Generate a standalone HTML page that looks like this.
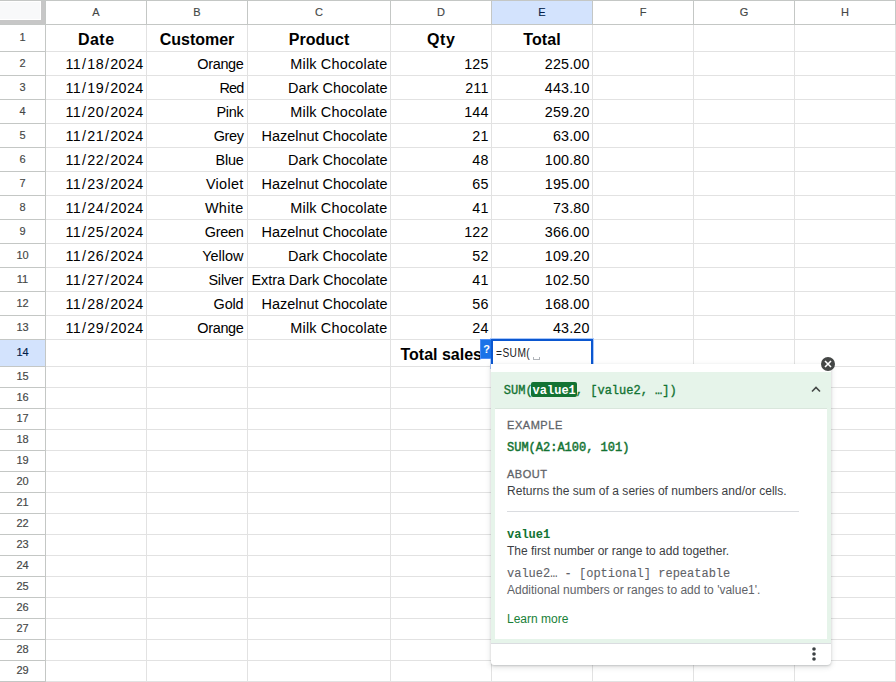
<!DOCTYPE html>
<html><head><meta charset="utf-8"><style>
html,body{margin:0;padding:0}
body{width:896px;height:682px;overflow:hidden;background:#fff;position:relative;font-family:'Liberation Sans', sans-serif}
div{position:absolute;box-sizing:border-box}
.t{white-space:nowrap;overflow:visible}
</style></head><body>
<div style="left:492px;top:1px;width:100px;height:23px;background:#d3e3fd;"></div>
<div style="left:0px;top:340px;width:45px;height:26px;background:#d3e3fd;"></div>
<div style="left:146px;top:25px;width:1px;height:657px;background:#e2e2e2;"></div>
<div style="left:247px;top:25px;width:1px;height:657px;background:#e2e2e2;"></div>
<div style="left:390px;top:25px;width:1px;height:657px;background:#e2e2e2;"></div>
<div style="left:491px;top:25px;width:1px;height:657px;background:#e2e2e2;"></div>
<div style="left:592px;top:25px;width:1px;height:657px;background:#e2e2e2;"></div>
<div style="left:693px;top:25px;width:1px;height:657px;background:#e2e2e2;"></div>
<div style="left:794px;top:25px;width:1px;height:657px;background:#e2e2e2;"></div>
<div style="left:895px;top:25px;width:1px;height:657px;background:#e2e2e2;"></div>
<div style="left:46px;top:51px;width:850px;height:1px;background:#e2e2e2;"></div>
<div style="left:46px;top:75px;width:850px;height:1px;background:#e2e2e2;"></div>
<div style="left:46px;top:99px;width:850px;height:1px;background:#e2e2e2;"></div>
<div style="left:46px;top:123px;width:850px;height:1px;background:#e2e2e2;"></div>
<div style="left:46px;top:147px;width:850px;height:1px;background:#e2e2e2;"></div>
<div style="left:46px;top:171px;width:850px;height:1px;background:#e2e2e2;"></div>
<div style="left:46px;top:195px;width:850px;height:1px;background:#e2e2e2;"></div>
<div style="left:46px;top:219px;width:850px;height:1px;background:#e2e2e2;"></div>
<div style="left:46px;top:243px;width:850px;height:1px;background:#e2e2e2;"></div>
<div style="left:46px;top:267px;width:850px;height:1px;background:#e2e2e2;"></div>
<div style="left:46px;top:291px;width:850px;height:1px;background:#e2e2e2;"></div>
<div style="left:46px;top:315px;width:850px;height:1px;background:#e2e2e2;"></div>
<div style="left:46px;top:339px;width:850px;height:1px;background:#e2e2e2;"></div>
<div style="left:46px;top:366px;width:850px;height:1px;background:#e2e2e2;"></div>
<div style="left:46px;top:387px;width:850px;height:1px;background:#e2e2e2;"></div>
<div style="left:46px;top:408px;width:850px;height:1px;background:#e2e2e2;"></div>
<div style="left:46px;top:429px;width:850px;height:1px;background:#e2e2e2;"></div>
<div style="left:46px;top:450px;width:850px;height:1px;background:#e2e2e2;"></div>
<div style="left:46px;top:471px;width:850px;height:1px;background:#e2e2e2;"></div>
<div style="left:46px;top:492px;width:850px;height:1px;background:#e2e2e2;"></div>
<div style="left:46px;top:513px;width:850px;height:1px;background:#e2e2e2;"></div>
<div style="left:46px;top:534px;width:850px;height:1px;background:#e2e2e2;"></div>
<div style="left:46px;top:555px;width:850px;height:1px;background:#e2e2e2;"></div>
<div style="left:46px;top:576px;width:850px;height:1px;background:#e2e2e2;"></div>
<div style="left:46px;top:597px;width:850px;height:1px;background:#e2e2e2;"></div>
<div style="left:46px;top:618px;width:850px;height:1px;background:#e2e2e2;"></div>
<div style="left:46px;top:639px;width:850px;height:1px;background:#e2e2e2;"></div>
<div style="left:46px;top:660px;width:850px;height:1px;background:#e2e2e2;"></div>
<div style="left:46px;top:681px;width:850px;height:1px;background:#e2e2e2;"></div>
<div style="left:0px;top:0px;width:896px;height:1px;background:#c4c7c5;"></div>
<div style="left:146px;top:0px;width:1px;height:25px;background:#c4c7c5;"></div>
<div style="left:247px;top:0px;width:1px;height:25px;background:#c4c7c5;"></div>
<div style="left:390px;top:0px;width:1px;height:25px;background:#c4c7c5;"></div>
<div style="left:491px;top:0px;width:1px;height:25px;background:#c4c7c5;"></div>
<div style="left:592px;top:0px;width:1px;height:25px;background:#c4c7c5;"></div>
<div style="left:693px;top:0px;width:1px;height:25px;background:#c4c7c5;"></div>
<div style="left:794px;top:0px;width:1px;height:25px;background:#c4c7c5;"></div>
<div style="left:895px;top:0px;width:1px;height:25px;background:#c4c7c5;"></div>
<div style="left:0px;top:51px;width:45px;height:1px;background:#c4c7c5;"></div>
<div style="left:0px;top:75px;width:45px;height:1px;background:#c4c7c5;"></div>
<div style="left:0px;top:99px;width:45px;height:1px;background:#c4c7c5;"></div>
<div style="left:0px;top:123px;width:45px;height:1px;background:#c4c7c5;"></div>
<div style="left:0px;top:147px;width:45px;height:1px;background:#c4c7c5;"></div>
<div style="left:0px;top:171px;width:45px;height:1px;background:#c4c7c5;"></div>
<div style="left:0px;top:195px;width:45px;height:1px;background:#c4c7c5;"></div>
<div style="left:0px;top:219px;width:45px;height:1px;background:#c4c7c5;"></div>
<div style="left:0px;top:243px;width:45px;height:1px;background:#c4c7c5;"></div>
<div style="left:0px;top:267px;width:45px;height:1px;background:#c4c7c5;"></div>
<div style="left:0px;top:291px;width:45px;height:1px;background:#c4c7c5;"></div>
<div style="left:0px;top:315px;width:45px;height:1px;background:#c4c7c5;"></div>
<div style="left:0px;top:339px;width:45px;height:1px;background:#c4c7c5;"></div>
<div style="left:0px;top:366px;width:45px;height:1px;background:#c4c7c5;"></div>
<div style="left:0px;top:387px;width:45px;height:1px;background:#c4c7c5;"></div>
<div style="left:0px;top:408px;width:45px;height:1px;background:#c4c7c5;"></div>
<div style="left:0px;top:429px;width:45px;height:1px;background:#c4c7c5;"></div>
<div style="left:0px;top:450px;width:45px;height:1px;background:#c4c7c5;"></div>
<div style="left:0px;top:471px;width:45px;height:1px;background:#c4c7c5;"></div>
<div style="left:0px;top:492px;width:45px;height:1px;background:#c4c7c5;"></div>
<div style="left:0px;top:513px;width:45px;height:1px;background:#c4c7c5;"></div>
<div style="left:0px;top:534px;width:45px;height:1px;background:#c4c7c5;"></div>
<div style="left:0px;top:555px;width:45px;height:1px;background:#c4c7c5;"></div>
<div style="left:0px;top:576px;width:45px;height:1px;background:#c4c7c5;"></div>
<div style="left:0px;top:597px;width:45px;height:1px;background:#c4c7c5;"></div>
<div style="left:0px;top:618px;width:45px;height:1px;background:#c4c7c5;"></div>
<div style="left:0px;top:639px;width:45px;height:1px;background:#c4c7c5;"></div>
<div style="left:0px;top:660px;width:45px;height:1px;background:#c4c7c5;"></div>
<div style="left:0px;top:681px;width:45px;height:1px;background:#c4c7c5;"></div>
<div style="left:0px;top:24px;width:896px;height:1px;background:#c4c7c5;"></div>
<div style="left:45px;top:0px;width:1px;height:682px;background:#c4c7c5;"></div>
<div style="left:0px;top:1px;width:45px;height:23px;background:#ffffff;"></div>
<div style="left:0px;top:2px;width:40px;height:17px;background:#f8f9fa;"></div>
<div style="left:41px;top:1px;width:4px;height:23px;background:#c7c7c7;"></div>
<div style="left:0px;top:20px;width:45px;height:4px;background:#c7c7c7;"></div>
<div class="t" style="left:46px;top:7.49px;width:100px;font-size:11px;line-height:11px;text-align:center;font-weight:normal;color:#444746;font-family:'Liberation Sans', sans-serif;-webkit-text-stroke:0.15px #444746">A</div>
<div class="t" style="left:147px;top:7.49px;width:100px;font-size:11px;line-height:11px;text-align:center;font-weight:normal;color:#444746;font-family:'Liberation Sans', sans-serif;-webkit-text-stroke:0.15px #444746">B</div>
<div class="t" style="left:248px;top:7.49px;width:142px;font-size:11px;line-height:11px;text-align:center;font-weight:normal;color:#444746;font-family:'Liberation Sans', sans-serif;-webkit-text-stroke:0.15px #444746">C</div>
<div class="t" style="left:391px;top:7.49px;width:100px;font-size:11px;line-height:11px;text-align:center;font-weight:normal;color:#444746;font-family:'Liberation Sans', sans-serif;-webkit-text-stroke:0.15px #444746">D</div>
<div class="t" style="left:492px;top:7.49px;width:100px;font-size:11px;line-height:11px;text-align:center;font-weight:normal;color:#041e49;font-family:'Liberation Sans', sans-serif;-webkit-text-stroke:0.15px #041e49">E</div>
<div class="t" style="left:593px;top:7.49px;width:100px;font-size:11px;line-height:11px;text-align:center;font-weight:normal;color:#444746;font-family:'Liberation Sans', sans-serif;-webkit-text-stroke:0.15px #444746">F</div>
<div class="t" style="left:694px;top:7.49px;width:100px;font-size:11px;line-height:11px;text-align:center;font-weight:normal;color:#444746;font-family:'Liberation Sans', sans-serif;-webkit-text-stroke:0.15px #444746">G</div>
<div class="t" style="left:795px;top:7.49px;width:100px;font-size:11px;line-height:11px;text-align:center;font-weight:normal;color:#444746;font-family:'Liberation Sans', sans-serif;-webkit-text-stroke:0.15px #444746">H</div>
<div class="t" style="left:0px;top:31.69px;width:45px;font-size:11px;line-height:11px;text-align:center;font-weight:normal;color:#444746;font-family:'Liberation Sans', sans-serif;-webkit-text-stroke:0.15px #444746">1</div>
<div class="t" style="left:0px;top:57.69px;width:45px;font-size:11px;line-height:11px;text-align:center;font-weight:normal;color:#444746;font-family:'Liberation Sans', sans-serif;-webkit-text-stroke:0.15px #444746">2</div>
<div class="t" style="left:0px;top:81.69px;width:45px;font-size:11px;line-height:11px;text-align:center;font-weight:normal;color:#444746;font-family:'Liberation Sans', sans-serif;-webkit-text-stroke:0.15px #444746">3</div>
<div class="t" style="left:0px;top:105.69px;width:45px;font-size:11px;line-height:11px;text-align:center;font-weight:normal;color:#444746;font-family:'Liberation Sans', sans-serif;-webkit-text-stroke:0.15px #444746">4</div>
<div class="t" style="left:0px;top:129.69px;width:45px;font-size:11px;line-height:11px;text-align:center;font-weight:normal;color:#444746;font-family:'Liberation Sans', sans-serif;-webkit-text-stroke:0.15px #444746">5</div>
<div class="t" style="left:0px;top:153.69px;width:45px;font-size:11px;line-height:11px;text-align:center;font-weight:normal;color:#444746;font-family:'Liberation Sans', sans-serif;-webkit-text-stroke:0.15px #444746">6</div>
<div class="t" style="left:0px;top:177.69px;width:45px;font-size:11px;line-height:11px;text-align:center;font-weight:normal;color:#444746;font-family:'Liberation Sans', sans-serif;-webkit-text-stroke:0.15px #444746">7</div>
<div class="t" style="left:0px;top:201.69px;width:45px;font-size:11px;line-height:11px;text-align:center;font-weight:normal;color:#444746;font-family:'Liberation Sans', sans-serif;-webkit-text-stroke:0.15px #444746">8</div>
<div class="t" style="left:0px;top:225.69px;width:45px;font-size:11px;line-height:11px;text-align:center;font-weight:normal;color:#444746;font-family:'Liberation Sans', sans-serif;-webkit-text-stroke:0.15px #444746">9</div>
<div class="t" style="left:0px;top:249.69px;width:45px;font-size:11px;line-height:11px;text-align:center;font-weight:normal;color:#444746;font-family:'Liberation Sans', sans-serif;-webkit-text-stroke:0.15px #444746">10</div>
<div class="t" style="left:0px;top:273.69px;width:45px;font-size:11px;line-height:11px;text-align:center;font-weight:normal;color:#444746;font-family:'Liberation Sans', sans-serif;-webkit-text-stroke:0.15px #444746">11</div>
<div class="t" style="left:0px;top:297.69px;width:45px;font-size:11px;line-height:11px;text-align:center;font-weight:normal;color:#444746;font-family:'Liberation Sans', sans-serif;-webkit-text-stroke:0.15px #444746">12</div>
<div class="t" style="left:0px;top:321.69px;width:45px;font-size:11px;line-height:11px;text-align:center;font-weight:normal;color:#444746;font-family:'Liberation Sans', sans-serif;-webkit-text-stroke:0.15px #444746">13</div>
<div class="t" style="left:0px;top:346.69px;width:45px;font-size:11px;line-height:11px;text-align:center;font-weight:normal;color:#041e49;font-family:'Liberation Sans', sans-serif;-webkit-text-stroke:0.15px #041e49">14</div>
<div class="t" style="left:0px;top:370.69px;width:45px;font-size:11px;line-height:11px;text-align:center;font-weight:normal;color:#444746;font-family:'Liberation Sans', sans-serif;-webkit-text-stroke:0.15px #444746">15</div>
<div class="t" style="left:0px;top:391.69px;width:45px;font-size:11px;line-height:11px;text-align:center;font-weight:normal;color:#444746;font-family:'Liberation Sans', sans-serif;-webkit-text-stroke:0.15px #444746">16</div>
<div class="t" style="left:0px;top:412.69px;width:45px;font-size:11px;line-height:11px;text-align:center;font-weight:normal;color:#444746;font-family:'Liberation Sans', sans-serif;-webkit-text-stroke:0.15px #444746">17</div>
<div class="t" style="left:0px;top:433.69px;width:45px;font-size:11px;line-height:11px;text-align:center;font-weight:normal;color:#444746;font-family:'Liberation Sans', sans-serif;-webkit-text-stroke:0.15px #444746">18</div>
<div class="t" style="left:0px;top:454.69px;width:45px;font-size:11px;line-height:11px;text-align:center;font-weight:normal;color:#444746;font-family:'Liberation Sans', sans-serif;-webkit-text-stroke:0.15px #444746">19</div>
<div class="t" style="left:0px;top:475.69px;width:45px;font-size:11px;line-height:11px;text-align:center;font-weight:normal;color:#444746;font-family:'Liberation Sans', sans-serif;-webkit-text-stroke:0.15px #444746">20</div>
<div class="t" style="left:0px;top:496.69px;width:45px;font-size:11px;line-height:11px;text-align:center;font-weight:normal;color:#444746;font-family:'Liberation Sans', sans-serif;-webkit-text-stroke:0.15px #444746">21</div>
<div class="t" style="left:0px;top:517.69px;width:45px;font-size:11px;line-height:11px;text-align:center;font-weight:normal;color:#444746;font-family:'Liberation Sans', sans-serif;-webkit-text-stroke:0.15px #444746">22</div>
<div class="t" style="left:0px;top:538.69px;width:45px;font-size:11px;line-height:11px;text-align:center;font-weight:normal;color:#444746;font-family:'Liberation Sans', sans-serif;-webkit-text-stroke:0.15px #444746">23</div>
<div class="t" style="left:0px;top:559.69px;width:45px;font-size:11px;line-height:11px;text-align:center;font-weight:normal;color:#444746;font-family:'Liberation Sans', sans-serif;-webkit-text-stroke:0.15px #444746">24</div>
<div class="t" style="left:0px;top:580.69px;width:45px;font-size:11px;line-height:11px;text-align:center;font-weight:normal;color:#444746;font-family:'Liberation Sans', sans-serif;-webkit-text-stroke:0.15px #444746">25</div>
<div class="t" style="left:0px;top:601.69px;width:45px;font-size:11px;line-height:11px;text-align:center;font-weight:normal;color:#444746;font-family:'Liberation Sans', sans-serif;-webkit-text-stroke:0.15px #444746">26</div>
<div class="t" style="left:0px;top:622.69px;width:45px;font-size:11px;line-height:11px;text-align:center;font-weight:normal;color:#444746;font-family:'Liberation Sans', sans-serif;-webkit-text-stroke:0.15px #444746">27</div>
<div class="t" style="left:0px;top:643.69px;width:45px;font-size:11px;line-height:11px;text-align:center;font-weight:normal;color:#444746;font-family:'Liberation Sans', sans-serif;-webkit-text-stroke:0.15px #444746">28</div>
<div class="t" style="left:0px;top:664.69px;width:45px;font-size:11px;line-height:11px;text-align:center;font-weight:normal;color:#444746;font-family:'Liberation Sans', sans-serif;-webkit-text-stroke:0.15px #444746">29</div>
<div class="t" style="left:46.25px;top:31.96px;width:100px;font-size:16px;line-height:16px;text-align:center;font-weight:bold;color:#000;font-family:'Liberation Sans', sans-serif;letter-spacing:0.5px">Date</div>
<div class="t" style="left:147.0px;top:31.96px;width:100px;font-size:16px;line-height:16px;text-align:center;font-weight:bold;color:#000;font-family:'Liberation Sans', sans-serif;letter-spacing:0px">Customer</div>
<div class="t" style="left:248.0px;top:31.96px;width:142px;font-size:16px;line-height:16px;text-align:center;font-weight:bold;color:#000;font-family:'Liberation Sans', sans-serif;letter-spacing:0px">Product</div>
<div class="t" style="left:391.3px;top:31.96px;width:100px;font-size:16px;line-height:16px;text-align:center;font-weight:bold;color:#000;font-family:'Liberation Sans', sans-serif;letter-spacing:0.6px">Qty</div>
<div class="t" style="left:492.075px;top:31.96px;width:100px;font-size:16px;line-height:16px;text-align:center;font-weight:bold;color:#000;font-family:'Liberation Sans', sans-serif;letter-spacing:0.15px">Total</div>
<div class="t" style="left:46px;top:57.30px;width:97.5px;font-size:14.3px;line-height:14.3px;text-align:right;font-weight:normal;color:#000;font-family:'Liberation Sans', sans-serif;letter-spacing:0.35px">11<span style="margin:0 1.0px">/</span>18<span style="margin:0 1.0px">/</span>2024</div>
<div class="t" style="left:147px;top:57.17px;width:96.5px;font-size:14.45px;line-height:14.45px;text-align:right;font-weight:normal;color:#000;font-family:'Liberation Sans', sans-serif;letter-spacing:-0.33px">Orange</div>
<div class="t" style="left:248px;top:57.17px;width:139.5px;font-size:14.45px;line-height:14.45px;text-align:right;font-weight:normal;color:#000;font-family:'Liberation Sans', sans-serif;letter-spacing:0.18px">Milk Chocolate</div>
<div class="t" style="left:391px;top:57.30px;width:97.5px;font-size:14.3px;line-height:14.3px;text-align:right;font-weight:normal;color:#000;font-family:'Liberation Sans', sans-serif;letter-spacing:0.15px">125</div>
<div class="t" style="left:492px;top:57.30px;width:97.5px;font-size:14.3px;line-height:14.3px;text-align:right;font-weight:normal;color:#000;font-family:'Liberation Sans', sans-serif;letter-spacing:0.15px">225.00</div>
<div class="t" style="left:46px;top:81.30px;width:97.5px;font-size:14.3px;line-height:14.3px;text-align:right;font-weight:normal;color:#000;font-family:'Liberation Sans', sans-serif;letter-spacing:0.35px">11<span style="margin:0 1.0px">/</span>19<span style="margin:0 1.0px">/</span>2024</div>
<div class="t" style="left:147px;top:81.17px;width:96.5px;font-size:14.45px;line-height:14.45px;text-align:right;font-weight:normal;color:#000;font-family:'Liberation Sans', sans-serif;letter-spacing:-0.8px">Red</div>
<div class="t" style="left:248px;top:81.17px;width:139.5px;font-size:14.45px;line-height:14.45px;text-align:right;font-weight:normal;color:#000;font-family:'Liberation Sans', sans-serif;letter-spacing:0px">Dark Chocolate</div>
<div class="t" style="left:391px;top:81.30px;width:97.5px;font-size:14.3px;line-height:14.3px;text-align:right;font-weight:normal;color:#000;font-family:'Liberation Sans', sans-serif;letter-spacing:0.15px">211</div>
<div class="t" style="left:492px;top:81.30px;width:97.5px;font-size:14.3px;line-height:14.3px;text-align:right;font-weight:normal;color:#000;font-family:'Liberation Sans', sans-serif;letter-spacing:0.15px">443.10</div>
<div class="t" style="left:46px;top:105.30px;width:97.5px;font-size:14.3px;line-height:14.3px;text-align:right;font-weight:normal;color:#000;font-family:'Liberation Sans', sans-serif;letter-spacing:0.35px">11<span style="margin:0 1.0px">/</span>20<span style="margin:0 1.0px">/</span>2024</div>
<div class="t" style="left:147px;top:105.17px;width:96.5px;font-size:14.45px;line-height:14.45px;text-align:right;font-weight:normal;color:#000;font-family:'Liberation Sans', sans-serif;letter-spacing:-0.25px">Pink</div>
<div class="t" style="left:248px;top:105.17px;width:139.5px;font-size:14.45px;line-height:14.45px;text-align:right;font-weight:normal;color:#000;font-family:'Liberation Sans', sans-serif;letter-spacing:0.18px">Milk Chocolate</div>
<div class="t" style="left:391px;top:105.30px;width:97.5px;font-size:14.3px;line-height:14.3px;text-align:right;font-weight:normal;color:#000;font-family:'Liberation Sans', sans-serif;letter-spacing:0.15px">144</div>
<div class="t" style="left:492px;top:105.30px;width:97.5px;font-size:14.3px;line-height:14.3px;text-align:right;font-weight:normal;color:#000;font-family:'Liberation Sans', sans-serif;letter-spacing:0.15px">259.20</div>
<div class="t" style="left:46px;top:129.30px;width:97.5px;font-size:14.3px;line-height:14.3px;text-align:right;font-weight:normal;color:#000;font-family:'Liberation Sans', sans-serif;letter-spacing:0.35px">11<span style="margin:0 1.0px">/</span>21<span style="margin:0 1.0px">/</span>2024</div>
<div class="t" style="left:147px;top:129.17px;width:96.5px;font-size:14.45px;line-height:14.45px;text-align:right;font-weight:normal;color:#000;font-family:'Liberation Sans', sans-serif;letter-spacing:-0.37px">Grey</div>
<div class="t" style="left:248px;top:129.17px;width:139.5px;font-size:14.45px;line-height:14.45px;text-align:right;font-weight:normal;color:#000;font-family:'Liberation Sans', sans-serif;letter-spacing:0px">Hazelnut Chocolate</div>
<div class="t" style="left:391px;top:129.30px;width:97.5px;font-size:14.3px;line-height:14.3px;text-align:right;font-weight:normal;color:#000;font-family:'Liberation Sans', sans-serif;letter-spacing:0.15px">21</div>
<div class="t" style="left:492px;top:129.30px;width:97.5px;font-size:14.3px;line-height:14.3px;text-align:right;font-weight:normal;color:#000;font-family:'Liberation Sans', sans-serif;letter-spacing:0.15px">63.00</div>
<div class="t" style="left:46px;top:153.30px;width:97.5px;font-size:14.3px;line-height:14.3px;text-align:right;font-weight:normal;color:#000;font-family:'Liberation Sans', sans-serif;letter-spacing:0.35px">11<span style="margin:0 1.0px">/</span>22<span style="margin:0 1.0px">/</span>2024</div>
<div class="t" style="left:147px;top:153.17px;width:96.5px;font-size:14.45px;line-height:14.45px;text-align:right;font-weight:normal;color:#000;font-family:'Liberation Sans', sans-serif;letter-spacing:-0.25px">Blue</div>
<div class="t" style="left:248px;top:153.17px;width:139.5px;font-size:14.45px;line-height:14.45px;text-align:right;font-weight:normal;color:#000;font-family:'Liberation Sans', sans-serif;letter-spacing:0px">Dark Chocolate</div>
<div class="t" style="left:391px;top:153.30px;width:97.5px;font-size:14.3px;line-height:14.3px;text-align:right;font-weight:normal;color:#000;font-family:'Liberation Sans', sans-serif;letter-spacing:0.15px">48</div>
<div class="t" style="left:492px;top:153.30px;width:97.5px;font-size:14.3px;line-height:14.3px;text-align:right;font-weight:normal;color:#000;font-family:'Liberation Sans', sans-serif;letter-spacing:0.15px">100.80</div>
<div class="t" style="left:46px;top:177.30px;width:97.5px;font-size:14.3px;line-height:14.3px;text-align:right;font-weight:normal;color:#000;font-family:'Liberation Sans', sans-serif;letter-spacing:0.35px">11<span style="margin:0 1.0px">/</span>23<span style="margin:0 1.0px">/</span>2024</div>
<div class="t" style="left:147px;top:177.17px;width:96.5px;font-size:14.45px;line-height:14.45px;text-align:right;font-weight:normal;color:#000;font-family:'Liberation Sans', sans-serif;letter-spacing:0.28px">Violet</div>
<div class="t" style="left:248px;top:177.17px;width:139.5px;font-size:14.45px;line-height:14.45px;text-align:right;font-weight:normal;color:#000;font-family:'Liberation Sans', sans-serif;letter-spacing:0px">Hazelnut Chocolate</div>
<div class="t" style="left:391px;top:177.30px;width:97.5px;font-size:14.3px;line-height:14.3px;text-align:right;font-weight:normal;color:#000;font-family:'Liberation Sans', sans-serif;letter-spacing:0.15px">65</div>
<div class="t" style="left:492px;top:177.30px;width:97.5px;font-size:14.3px;line-height:14.3px;text-align:right;font-weight:normal;color:#000;font-family:'Liberation Sans', sans-serif;letter-spacing:0.15px">195.00</div>
<div class="t" style="left:46px;top:201.30px;width:97.5px;font-size:14.3px;line-height:14.3px;text-align:right;font-weight:normal;color:#000;font-family:'Liberation Sans', sans-serif;letter-spacing:0.35px">11<span style="margin:0 1.0px">/</span>24<span style="margin:0 1.0px">/</span>2024</div>
<div class="t" style="left:147px;top:201.17px;width:96.5px;font-size:14.45px;line-height:14.45px;text-align:right;font-weight:normal;color:#000;font-family:'Liberation Sans', sans-serif;letter-spacing:0.34px">White</div>
<div class="t" style="left:248px;top:201.17px;width:139.5px;font-size:14.45px;line-height:14.45px;text-align:right;font-weight:normal;color:#000;font-family:'Liberation Sans', sans-serif;letter-spacing:0.18px">Milk Chocolate</div>
<div class="t" style="left:391px;top:201.30px;width:97.5px;font-size:14.3px;line-height:14.3px;text-align:right;font-weight:normal;color:#000;font-family:'Liberation Sans', sans-serif;letter-spacing:0.15px">41</div>
<div class="t" style="left:492px;top:201.30px;width:97.5px;font-size:14.3px;line-height:14.3px;text-align:right;font-weight:normal;color:#000;font-family:'Liberation Sans', sans-serif;letter-spacing:0.15px">73.80</div>
<div class="t" style="left:46px;top:225.30px;width:97.5px;font-size:14.3px;line-height:14.3px;text-align:right;font-weight:normal;color:#000;font-family:'Liberation Sans', sans-serif;letter-spacing:0.35px">11<span style="margin:0 1.0px">/</span>25<span style="margin:0 1.0px">/</span>2024</div>
<div class="t" style="left:147px;top:225.17px;width:96.5px;font-size:14.45px;line-height:14.45px;text-align:right;font-weight:normal;color:#000;font-family:'Liberation Sans', sans-serif;letter-spacing:-0.3px">Green</div>
<div class="t" style="left:248px;top:225.17px;width:139.5px;font-size:14.45px;line-height:14.45px;text-align:right;font-weight:normal;color:#000;font-family:'Liberation Sans', sans-serif;letter-spacing:0px">Hazelnut Chocolate</div>
<div class="t" style="left:391px;top:225.30px;width:97.5px;font-size:14.3px;line-height:14.3px;text-align:right;font-weight:normal;color:#000;font-family:'Liberation Sans', sans-serif;letter-spacing:0.15px">122</div>
<div class="t" style="left:492px;top:225.30px;width:97.5px;font-size:14.3px;line-height:14.3px;text-align:right;font-weight:normal;color:#000;font-family:'Liberation Sans', sans-serif;letter-spacing:0.15px">366.00</div>
<div class="t" style="left:46px;top:249.30px;width:97.5px;font-size:14.3px;line-height:14.3px;text-align:right;font-weight:normal;color:#000;font-family:'Liberation Sans', sans-serif;letter-spacing:0.35px">11<span style="margin:0 1.0px">/</span>26<span style="margin:0 1.0px">/</span>2024</div>
<div class="t" style="left:147px;top:249.17px;width:96.5px;font-size:14.45px;line-height:14.45px;text-align:right;font-weight:normal;color:#000;font-family:'Liberation Sans', sans-serif;letter-spacing:0px">Yellow</div>
<div class="t" style="left:248px;top:249.17px;width:139.5px;font-size:14.45px;line-height:14.45px;text-align:right;font-weight:normal;color:#000;font-family:'Liberation Sans', sans-serif;letter-spacing:0px">Dark Chocolate</div>
<div class="t" style="left:391px;top:249.30px;width:97.5px;font-size:14.3px;line-height:14.3px;text-align:right;font-weight:normal;color:#000;font-family:'Liberation Sans', sans-serif;letter-spacing:0.15px">52</div>
<div class="t" style="left:492px;top:249.30px;width:97.5px;font-size:14.3px;line-height:14.3px;text-align:right;font-weight:normal;color:#000;font-family:'Liberation Sans', sans-serif;letter-spacing:0.15px">109.20</div>
<div class="t" style="left:46px;top:273.30px;width:97.5px;font-size:14.3px;line-height:14.3px;text-align:right;font-weight:normal;color:#000;font-family:'Liberation Sans', sans-serif;letter-spacing:0.35px">11<span style="margin:0 1.0px">/</span>27<span style="margin:0 1.0px">/</span>2024</div>
<div class="t" style="left:147px;top:273.17px;width:96.5px;font-size:14.45px;line-height:14.45px;text-align:right;font-weight:normal;color:#000;font-family:'Liberation Sans', sans-serif;letter-spacing:-0.17px">Silver</div>
<div class="t" style="left:248px;top:273.17px;width:139.5px;font-size:14.45px;line-height:14.45px;text-align:right;font-weight:normal;color:#000;font-family:'Liberation Sans', sans-serif;letter-spacing:-0.06px">Extra Dark Chocolate</div>
<div class="t" style="left:391px;top:273.30px;width:97.5px;font-size:14.3px;line-height:14.3px;text-align:right;font-weight:normal;color:#000;font-family:'Liberation Sans', sans-serif;letter-spacing:0.15px">41</div>
<div class="t" style="left:492px;top:273.30px;width:97.5px;font-size:14.3px;line-height:14.3px;text-align:right;font-weight:normal;color:#000;font-family:'Liberation Sans', sans-serif;letter-spacing:0.15px">102.50</div>
<div class="t" style="left:46px;top:297.30px;width:97.5px;font-size:14.3px;line-height:14.3px;text-align:right;font-weight:normal;color:#000;font-family:'Liberation Sans', sans-serif;letter-spacing:0.35px">11<span style="margin:0 1.0px">/</span>28<span style="margin:0 1.0px">/</span>2024</div>
<div class="t" style="left:147px;top:297.17px;width:96.5px;font-size:14.45px;line-height:14.45px;text-align:right;font-weight:normal;color:#000;font-family:'Liberation Sans', sans-serif;letter-spacing:-0.15px">Gold</div>
<div class="t" style="left:248px;top:297.17px;width:139.5px;font-size:14.45px;line-height:14.45px;text-align:right;font-weight:normal;color:#000;font-family:'Liberation Sans', sans-serif;letter-spacing:0px">Hazelnut Chocolate</div>
<div class="t" style="left:391px;top:297.30px;width:97.5px;font-size:14.3px;line-height:14.3px;text-align:right;font-weight:normal;color:#000;font-family:'Liberation Sans', sans-serif;letter-spacing:0.15px">56</div>
<div class="t" style="left:492px;top:297.30px;width:97.5px;font-size:14.3px;line-height:14.3px;text-align:right;font-weight:normal;color:#000;font-family:'Liberation Sans', sans-serif;letter-spacing:0.15px">168.00</div>
<div class="t" style="left:46px;top:321.30px;width:97.5px;font-size:14.3px;line-height:14.3px;text-align:right;font-weight:normal;color:#000;font-family:'Liberation Sans', sans-serif;letter-spacing:0.35px">11<span style="margin:0 1.0px">/</span>29<span style="margin:0 1.0px">/</span>2024</div>
<div class="t" style="left:147px;top:321.17px;width:96.5px;font-size:14.45px;line-height:14.45px;text-align:right;font-weight:normal;color:#000;font-family:'Liberation Sans', sans-serif;letter-spacing:-0.33px">Orange</div>
<div class="t" style="left:248px;top:321.17px;width:139.5px;font-size:14.45px;line-height:14.45px;text-align:right;font-weight:normal;color:#000;font-family:'Liberation Sans', sans-serif;letter-spacing:0.18px">Milk Chocolate</div>
<div class="t" style="left:391px;top:321.30px;width:97.5px;font-size:14.3px;line-height:14.3px;text-align:right;font-weight:normal;color:#000;font-family:'Liberation Sans', sans-serif;letter-spacing:0.15px">24</div>
<div class="t" style="left:492px;top:321.30px;width:97.5px;font-size:14.3px;line-height:14.3px;text-align:right;font-weight:normal;color:#000;font-family:'Liberation Sans', sans-serif;letter-spacing:0.15px">43.20</div>
<div class="t" style="left:392px;top:346.76px;width:90px;font-size:16px;line-height:16px;text-align:right;font-weight:bold;color:#000;font-family:'Liberation Sans', sans-serif;">Total sales</div>
<!-- editor -->
<div style="left:490px;top:338px;width:104px;height:26px;background:#a8c7fa"></div>
<div style="left:491px;top:339px;width:102px;height:25px;background:#fff;border:2px solid #0b57d0;border-bottom:0"></div>
<div class="t" style="left:495.8px;top:346.5px;font-size:12px;line-height:12px;color:#202124;letter-spacing:0.5px;transform:scaleX(0.85);transform-origin:0 0">=SUM(</div>
<div style="left:533px;top:356.5px;width:7px;height:3.5px;border:1px solid #b0b4b9;border-top:0"></div>
<div style="left:490px;top:358px;width:1px;height:11px;background:#a8c7fa"></div>
<div style="left:491px;top:363px;width:2px;height:2px;background:#0b57d0"></div>
<!-- ? badge -->
<div style="left:480px;top:339px;width:11px;height:20px;background:#4f8df5"></div>
<div style="left:481px;top:340px;width:10px;height:18px;background:#1a73e8"></div>
<div class="t" style="left:481px;top:344.2px;width:11px;font-size:11px;line-height:11px;color:#fff;font-weight:bold;text-align:center">?</div>
<!-- popup -->
<div style="left:491px;top:364px;width:340px;height:301px;background:#fff;border-radius:0 0 4px 3px;box-shadow:0 1px 2px rgba(60,64,67,.22),0 2px 5px 1px rgba(60,64,67,.12)"></div>
<div style="left:491px;top:372px;width:340px;height:271px;background:#e6f4ea"></div>
<div style="left:495px;top:408px;width:332px;height:231px;background:#fff;border-top:1px solid #d9e6dc"></div>
<div style="left:491px;top:643px;width:340px;height:1px;background:#dadce0"></div>
<!-- header formula -->
<div style="left:531px;top:382px;width:46px;height:15px;background:#137333;border-radius:2px"></div>
<div class="t" style="left:503.8px;top:385.2px;font-size:12px;line-height:12px;font-family:'Liberation Mono',monospace;color:#137333;-webkit-text-stroke:0.35px #137333">SUM(<b style="color:#fff;-webkit-text-stroke:0">value1</b>, [value2, …])</div>
<!-- chevron -->
<svg style="position:absolute;left:811px;top:385.5px" width="10" height="7" viewBox="0 0 10 7"><path d="M1 5.5 L5 1.5 L9 5.5" fill="none" stroke="#444746" stroke-width="1.6"/></svg>
<!-- close -->
<svg style="position:absolute;left:821px;top:357px" width="14" height="14" viewBox="0 0 14 14"><circle cx="7" cy="7" r="7" fill="#444746"/><path d="M4 4 L10 10 M10 4 L4 10" stroke="#fff" stroke-width="1.6"/></svg>
<!-- body -->
<div class="t" style="left:507px;top:420px;font-size:11px;line-height:11px;color:#5f6368;letter-spacing:.55px;-webkit-text-stroke:0.3px #5f6368">EXAMPLE</div>
<div class="t" style="left:507px;top:441.8px;font-size:12px;line-height:12px;font-family:'Liberation Mono',monospace;color:#137333;-webkit-text-stroke:0.45px #137333">SUM(A2:A100, 101)</div>
<div class="t" style="left:507px;top:469px;font-size:11px;line-height:11px;color:#5f6368;letter-spacing:.5px;-webkit-text-stroke:0.3px #5f6368">ABOUT</div>
<div class="t" style="left:507px;top:484.5px;font-size:12px;line-height:12px;color:#3c4043;letter-spacing:0.03px">Returns the sum of a series of numbers and/or cells.</div>
<div style="left:507px;top:511px;width:292px;height:1px;background:#dadce0"></div>
<div class="t" style="left:507px;top:529px;font-size:12px;line-height:12px;font-family:'Liberation Mono',monospace;color:#137333;font-weight:bold">value1</div>
<div class="t" style="left:507px;top:544.5px;font-size:12px;line-height:12px;color:#3c4043">The first number or range to add together.</div>
<div class="t" style="left:507px;top:568px;font-size:12px;line-height:12px;font-family:'Liberation Mono',monospace;color:#5f6368;-webkit-text-stroke:0.1px #5f6368">value2… - [optional] repeatable</div>
<div class="t" style="left:507px;top:584px;font-size:12px;line-height:12px;color:#5f6368">Additional numbers or ranges to add to 'value1'.</div>
<div class="t" style="left:507px;top:612.5px;font-size:12px;line-height:12px;color:#188038">Learn more</div>
<!-- kebab -->
<svg style="position:absolute;left:811px;top:646px" width="6" height="16" viewBox="0 0 6 16"><circle cx="3" cy="3" r="1.8" fill="#3c4043"/><circle cx="3" cy="8" r="1.8" fill="#3c4043"/><circle cx="3" cy="13" r="1.8" fill="#3c4043"/></svg>

</body></html>
